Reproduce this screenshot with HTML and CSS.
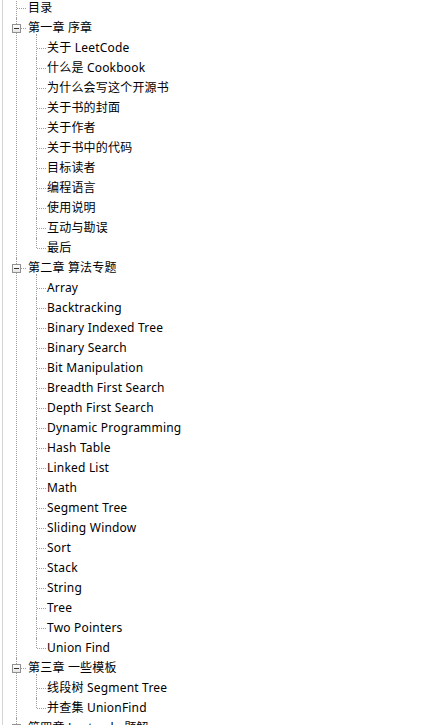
FILE: index.html
```html
<!DOCTYPE html>
<html lang="zh">
<head>
<meta charset="utf-8">
<title>目录</title>
<link rel="stylesheet" href="styles.css">
</head>
<body>
<div class="frame">
  <ul class="tree">
    <li class="node"><div class="row"><span class="label">目录</span></div></li>
    <li class="node">
      <div class="row"><span class="toggle"></span><span class="label">第一章 序章</span></div>
      <ul class="children">
        <li><div class="row"><span class="label">关于 LeetCode</span></div></li>
        <li><div class="row"><span class="label">什么是 Cookbook</span></div></li>
        <li><div class="row"><span class="label">为什么会写这个开源书</span></div></li>
        <li><div class="row"><span class="label">关于书的封面</span></div></li>
        <li><div class="row"><span class="label">关于作者</span></div></li>
        <li><div class="row"><span class="label">关于书中的代码</span></div></li>
        <li><div class="row"><span class="label">目标读者</span></div></li>
        <li><div class="row"><span class="label">编程语言</span></div></li>
        <li><div class="row"><span class="label">使用说明</span></div></li>
        <li><div class="row"><span class="label">互动与勘误</span></div></li>
        <li><div class="row"><span class="label">最后</span></div></li>
      </ul>
    </li>
    <li class="node">
      <div class="row"><span class="toggle"></span><span class="label">第二章 算法专题</span></div>
      <ul class="children">
        <li><div class="row"><span class="label">Array</span></div></li>
        <li><div class="row"><span class="label">Backtracking</span></div></li>
        <li><div class="row"><span class="label">Binary Indexed Tree</span></div></li>
        <li><div class="row"><span class="label">Binary Search</span></div></li>
        <li><div class="row"><span class="label">Bit Manipulation</span></div></li>
        <li><div class="row"><span class="label">Breadth First Search</span></div></li>
        <li><div class="row"><span class="label">Depth First Search</span></div></li>
        <li><div class="row"><span class="label">Dynamic Programming</span></div></li>
        <li><div class="row"><span class="label">Hash Table</span></div></li>
        <li><div class="row"><span class="label">Linked List</span></div></li>
        <li><div class="row"><span class="label">Math</span></div></li>
        <li><div class="row"><span class="label">Segment Tree</span></div></li>
        <li><div class="row"><span class="label">Sliding Window</span></div></li>
        <li><div class="row"><span class="label">Sort</span></div></li>
        <li><div class="row"><span class="label">Stack</span></div></li>
        <li><div class="row"><span class="label">String</span></div></li>
        <li><div class="row"><span class="label">Tree</span></div></li>
        <li><div class="row"><span class="label">Two Pointers</span></div></li>
        <li><div class="row"><span class="label">Union Find</span></div></li>
      </ul>
    </li>
    <li class="node">
      <div class="row"><span class="toggle"></span><span class="label">第三章 一些模板</span></div>
      <ul class="children">
        <li><div class="row"><span class="label">线段树 Segment Tree</span></div></li>
        <li><div class="row"><span class="label">并查集 UnionFind</span></div></li>
      </ul>
    </li>
    <li class="node">
      <div class="row"><span class="toggle collapsed"></span><span class="label">第四章 Leetcode 题解</span></div>
    </li>
  </ul>
</div>
</body>
</html>
```
FILE: styles.css
```css
html, body {
  margin: 0;
  padding: 0;
  background: #ffffff;
  height: 100%;
  overflow: hidden;
}

body {
  font-family: "Noto Sans", "Noto Sans CJK SC", sans-serif;
  font-size: 12px;
  letter-spacing: 0.2px;
  color: #000000;
}

.frame {
  height: 100%;
  margin-left: 2px;
  border-left: 1px solid #d4d4d4;
  overflow: hidden;
}

.tree {
  list-style: none;
  margin: -2px 0 0 0;
  padding: 0 0 0 13px;
}

.tree li {
  position: relative;
}

.tree > li::before {
  content: "";
  position: absolute;
  left: 0;
  top: 0;
  bottom: 0;
  border-left: 1px dotted #a0a0a0;
}

.row {
  position: relative;
  height: 20px;
  display: flex;
  align-items: center;
  white-space: nowrap;
}

.tree > li > .row {
  padding-left: 12px;
}

.row::before {
  content: "";
  position: absolute;
  left: 1px;
  top: 10px;
  width: 9px;
  border-top: 1px dotted #a0a0a0;
}

.label {
  line-height: 20px;
}

.toggle {
  position: absolute;
  left: -4px;
  top: 6px;
  width: 7px;
  height: 7px;
  border: 1px solid #919191;
  background: linear-gradient(#ffffff, #e6e6e6);
  z-index: 1;
}

.toggle::after {
  content: "";
  position: absolute;
  left: 1px;
  top: 3px;
  width: 5px;
  height: 1px;
  background: #333333;
}

.children {
  list-style: none;
  margin: 0;
  padding: 0 0 0 20px;
}

.children > li::before {
  content: "";
  position: absolute;
  left: 0;
  top: 0;
  bottom: 0;
  border-left: 1px dotted #a0a0a0;
}

.children > li:first-child::before {
  top: -4px;
}

.children > li:last-child::before {
  bottom: auto;
  height: 10px;
}

.children > li > .row {
  padding-left: 11px;
}
```
